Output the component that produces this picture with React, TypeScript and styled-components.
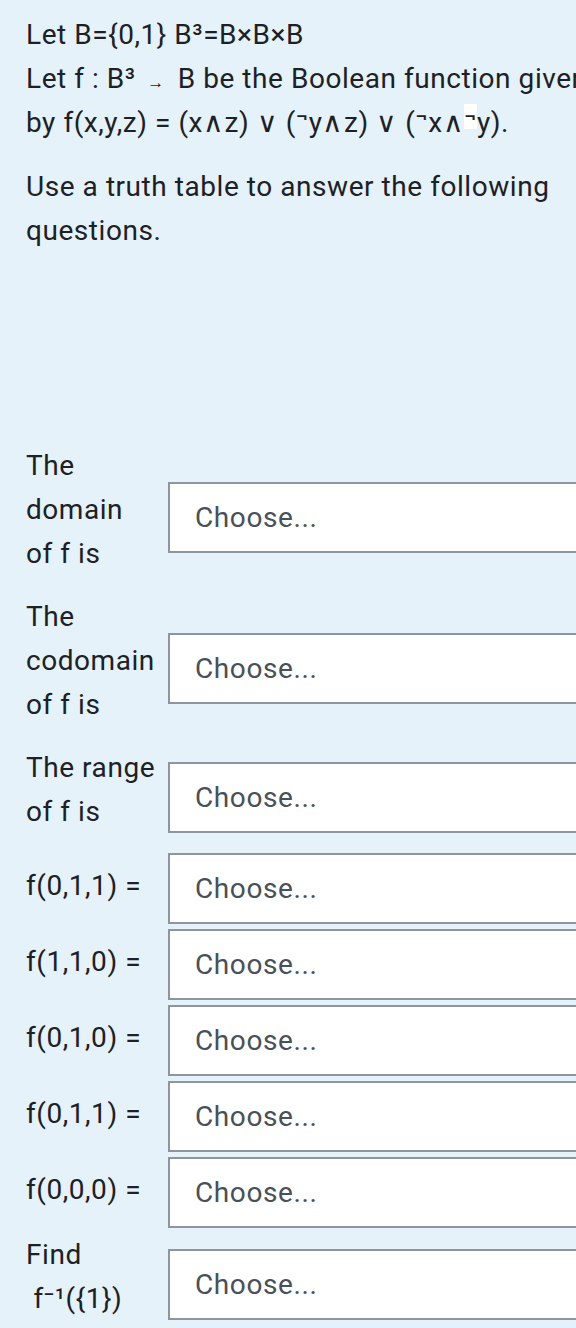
import styled, { createGlobalStyle } from 'styled-components'

const GlobalStyle = createGlobalStyle`
	html, body {
		margin: 0;
		padding: 0;
		overflow: hidden;
		background: #e5f2f9;
	}
	body {
		font-family: Roboto, "Liberation Sans", sans-serif;
		color: #1d2125;
	}
`

const Page = styled.div`
	width: 640px;
	min-height: 1328px;
	padding: 13px 0 0 26px;
	box-sizing: border-box;
	background: #e5f2f9;
	font-size: 28px;
	letter-spacing: 0.55px;
	line-height: 44px;
`

const Para = styled.p`
	margin: 0 0 20px 0;
`

const Arrow = styled.span`
	font-size: 17px;
	line-height: 0;
	margin: 0 13px 0 4px;
`

const Not = styled.span<{ $mark?: boolean }>`
	font-size: 22px;
	line-height: 0;
	vertical-align: 8px;
	background: ${props => props.$mark ? "#ffffff" : "transparent"};
`

const Form = styled.div`
	display: flex;
	flex-direction: column;
	gap: 5px;
	margin-top: 191px;
`

const Row = styled.div`
	display: flex;
	align-items: center;
`

const Label = styled.div<{ $tall?: boolean }>`
	width: 142px;
	flex-shrink: 0;
	white-space: nowrap;
	padding-bottom: ${props => props.$tall ? "14px" : "5px"};
	line-height: 44px;
`

const Select = styled.select`
	appearance: none;
	-webkit-appearance: none;
	width: 440px;
	height: 71px;
	flex-shrink: 0;
	box-sizing: border-box;
	border: 2px solid #8f959e;
	border-radius: 0;
	background: #ffffff;
	padding: 0 0 0 25px;
	font-family: Roboto, "Liberation Sans", sans-serif;
	font-size: 28px;
	letter-spacing: 0.6px;
	color: #495057;
	outline: none;
`

const rows = [
	["The", "domain", "of f is"],
	["The", "codomain", "of f is"],
	["The range", "of f is"],
	["f(0,1,1) ="],
	["f(1,1,0) ="],
	["f(0,1,0) ="],
	["f(0,1,1) ="],
	["f(0,0,0) ="],
	["Find", "\u00a0f⁻¹({1})"],
]

const App = () => {
	return (
		<>
			<GlobalStyle />
			<Page>
				<Para>
					Let B={'{'}0,1{'}'} B³=B×B×B<br />
					Let f : B³ <Arrow>→</Arrow>B be the Boolean function given<br />
					by f(x,y,z) = (x∧z) ∨ (<Not>¬</Not>y∧z) ∨ (<Not>¬</Not>x∧<Not $mark>¬</Not>y).
				</Para>
				<Para>Use a truth table to answer the following questions.</Para>

				<Form>
					{rows.map((lines, i) => (
						<Row key={i}>
							<Label $tall={lines.length > 1}>
								{lines.map((l, j) => (
									<span key={j}>{j > 0 && <br />}{l}</span>
								))}
							</Label>
							<Select defaultValue="">
								<option value="">Choose...</option>
							</Select>
						</Row>
					))}
				</Form>
			</Page>
		</>
	)
}

export default App
